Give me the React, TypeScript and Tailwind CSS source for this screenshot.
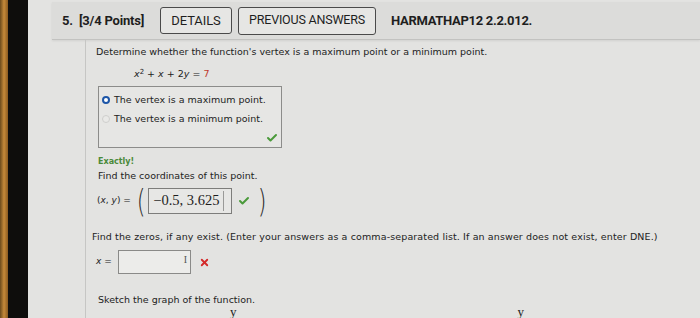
import { Check, X } from 'lucide-react';

export default function App() {
  return (
    <div className="w-[700px] h-[318px] flex overflow-hidden bg-[#e3e3e1]" style={{ fontFamily: '"DejaVu Sans", Verdana, sans-serif' }}>
      {/* monitor bezel */}
      <div className="w-[8px] bg-gradient-to-r from-[#6b4a1c] via-[#c68a3a] to-[#8a5a20]" />
      <div className="w-[20px] bg-[#0e0d0c]" />

      <div className="flex-1 flex flex-col">
        {/* question header */}
        <div
          className="ml-[24px] mt-[2px] h-[38px] shrink-0 bg-[#dcdcda] border-b border-[#c2c2c0] shadow-[0_1px_2px_rgba(0,0,0,0.08)] flex items-center pl-[10px] text-[#1e1e1e]"
          style={{ fontFamily: 'Roboto, "Liberation Sans", sans-serif' }}
        >
          <span className="text-[13px] font-bold tracking-[-0.2px] w-[98px]">5. &nbsp;[3/4 Points]</span>
          <div className="h-[27px] w-[72px] border-[1.5px] border-[#4a4a4a] rounded-[3px] bg-[#e6e6e4] flex items-center justify-center text-[13px] tracking-[-0.1px]">
            DETAILS
          </div>
          <div className="ml-[6px] h-[28px] w-[138px] border-[1.5px] border-[#4a4a4a] rounded-[3px] bg-[#e6e6e4] flex items-center justify-center text-[12.5px] tracking-[-0.2px]">
            PREVIOUS ANSWERS
          </div>
          <span className="ml-[15px] text-[13px] font-bold tracking-[-0.3px]">HARMATHAP12 2.2.012.</span>
        </div>

        {/* question body */}
        <div className="flex-1 ml-[57px] border-l border-[#c6c6c4] pl-[10px] pt-[5px] text-[9.5px] text-[#222]">
          <p className="leading-[14px]">Determine whether the function's vertex is a maximum point or a minimum point.</p>
          <p className="ml-[38px] mt-[8px] leading-[14px]">
            <i>x</i><sup className="text-[7px]">2</sup> + <i>x</i> + 2<i>y</i> = <span className="text-[#c0392b]">7</span>
          </p>

          <div className="mt-[5px] ml-[2px] w-[184px] h-[62px] border border-[#8c8c8a] bg-[#e6e6e4] relative pl-[3px] pt-[6px]">
            <div className="flex items-center gap-[4px] h-[14px]">
              <span className="w-[8px] h-[8px] rounded-full border-[2.5px] border-[#1d56a8] bg-white" />
              <span>The vertex is a maximum point.</span>
            </div>
            <div className="flex items-center gap-[4px] h-[14px] mt-[5px]">
              <span className="w-[8px] h-[8px] rounded-full border border-[#cfcfcd] bg-[#e9e9e7]" />
              <span>The vertex is a minimum point.</span>
            </div>
            <Check className="absolute right-[3px] bottom-[3px] text-[#4a9a3a]" size={12} strokeWidth={4} />
          </div>

          <p className="mt-[8px] ml-[2px] text-[8px] font-bold text-[#4a8a3a]">Exactly!</p>
          <p className="mt-[1px] ml-[2px] leading-[14px]">Find the coordinates of this point.</p>
          <div className="mt-[3px] ml-[1px] flex items-center h-[30px]">
            <span className="text-[9px]">(<i>x</i>, <i>y</i>) =</span>
            <span className="ml-[4px] text-[32px] leading-none text-[#2a2a2a] scale-x-[0.7]" style={{ fontFamily: '"DejaVu Sans", sans-serif', fontWeight: 200 }}>(</span>
            <div className="ml-[1px] w-[84px] h-[26px] border border-[#7d7d7b] bg-[#e7e7e5] flex items-center pl-[4px]">
              <div className="h-[20px] flex items-center border-r border-[#9a9a98] pr-[3px] text-[14.5px] text-[#1e1e1e]" style={{ fontFamily: '"Liberation Serif", serif' }}>
                −0.5, 3.625
              </div>
            </div>
            <Check className="ml-[6px] text-[#4a9a3a]" size={12} strokeWidth={4} />
            <span className="ml-[6px] text-[32px] leading-none text-[#2a2a2a] scale-x-[0.7]" style={{ fontFamily: '"DejaVu Sans", sans-serif', fontWeight: 200 }}>)</span>
          </div>

          <p className="mt-[14px] -ml-[4px] leading-[14px] tracking-[0.12px]">Find the zeros, if any exist. (Enter your answers as a comma-separated list. If an answer does not exist, enter DNE.)</p>
          <div className="mt-[5px] flex items-center h-[26px]">
            <span className="text-[9px] w-[22px]"><i>x</i> =</span>
            <div className="w-[73px] h-[24px] border border-[#8a8a88] bg-[#ececea] relative">
              <span className="absolute right-[3px] top-[1px] text-[10px] text-[#555]" style={{ fontFamily: '"Liberation Serif", serif' }}>I</span>
            </div>
            <X className="ml-[8px] text-[#d42a2a]" size={11} strokeWidth={4} />
          </div>

          <p className="mt-[18px] ml-[2px] leading-[14px]">Sketch the graph of the function.</p>
          <div className="-mt-[2px] flex text-[13px] leading-[14px]" style={{ fontFamily: '"Liberation Serif", serif' }}>
            <span className="ml-[134px]">y</span>
            <span className="ml-[281px]">y</span>
          </div>
        </div>
      </div>
    </div>
  );
}
